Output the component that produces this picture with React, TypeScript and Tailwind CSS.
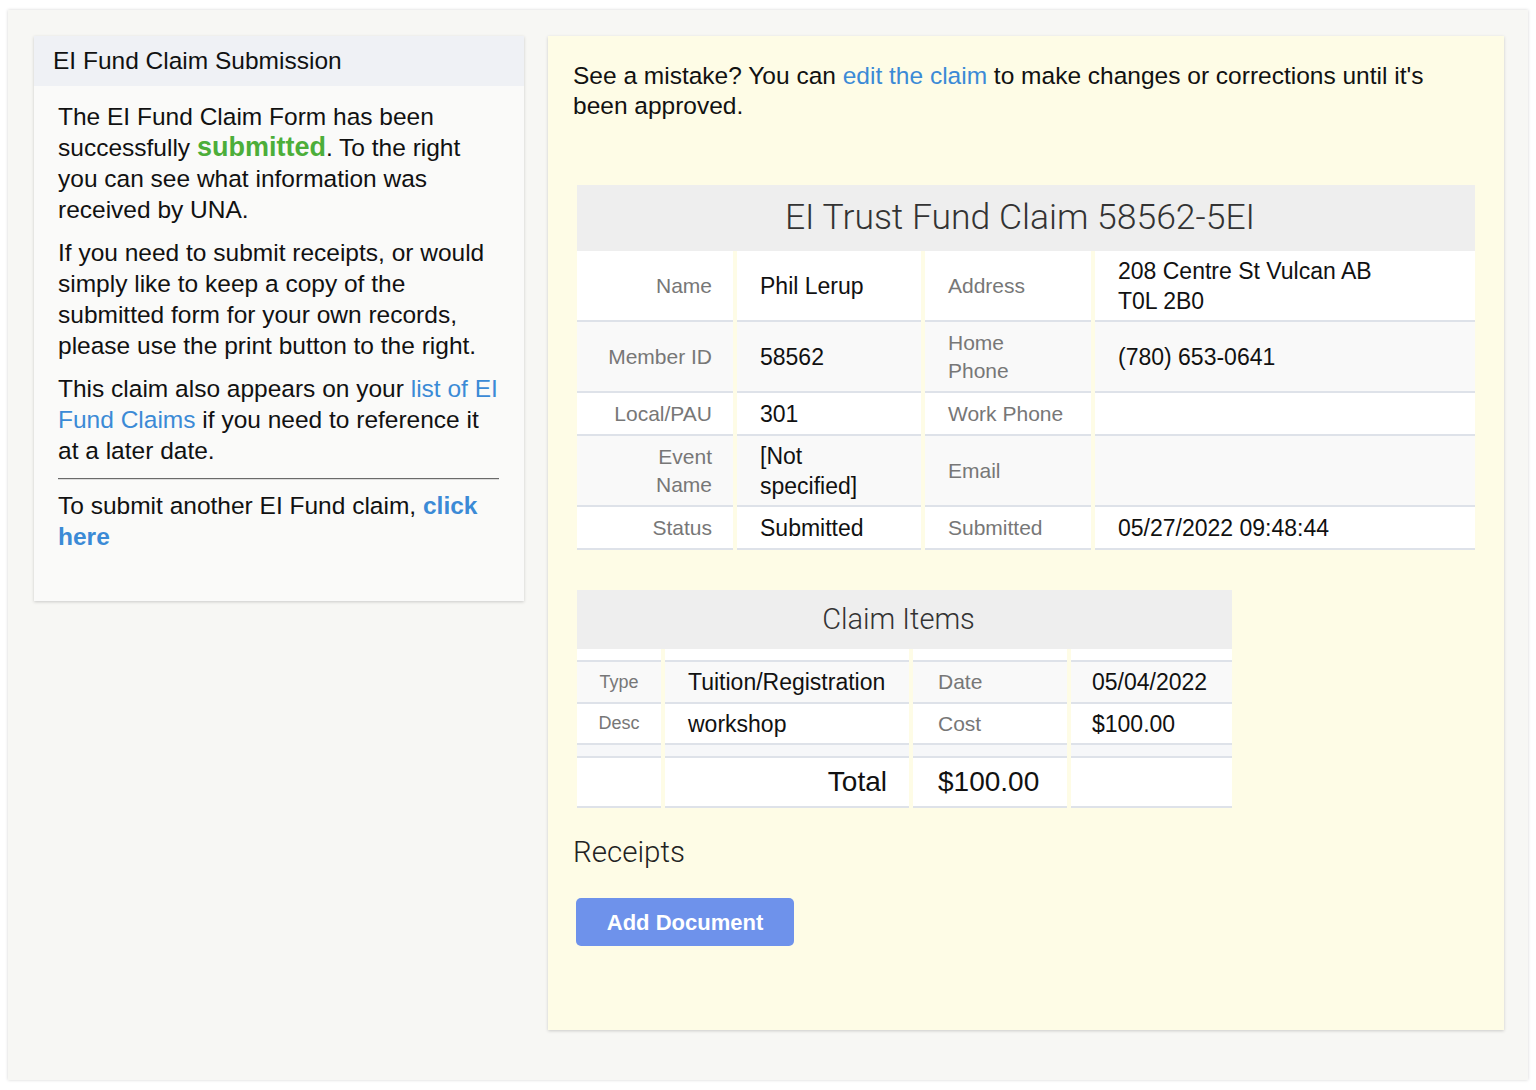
import React from "react";

const sans = { fontFamily: '"Liberation Sans", Arial, Helvetica, sans-serif' };
const light = { fontFamily: 'Roboto, "Liberation Sans", Arial, sans-serif' };

type Row = {
  l1: React.ReactNode;
  v1: React.ReactNode;
  l2: React.ReactNode;
  v2: React.ReactNode;
  tall?: boolean;
  alt?: boolean;
};

const claimRows: Row[] = [
  {
    l1: "Name",
    v1: "Phil Lerup",
    l2: "Address",
    v2: (
      <>
        208 Centre St Vulcan AB
        <br />
        T0L 2B0
      </>
    ),
    tall: true,
  },
  {
    l1: "Member ID",
    v1: "58562",
    l2: (
      <>
        Home
        <br />
        Phone
      </>
    ),
    v2: "(780) 653-0641",
    tall: true,
    alt: true,
  },
  { l1: "Local/PAU", v1: "301", l2: "Work Phone", v2: "" },
  {
    l1: (
      <>
        Event
        <br />
        Name
      </>
    ),
    v1: (
      <>
        [Not
        <br />
        specified]
      </>
    ),
    l2: "Email",
    v2: "",
    tall: true,
    alt: true,
  },
  { l1: "Status", v1: "Submitted", l2: "Submitted", v2: "05/27/2022 09:48:44" },
];

const cell = "border-b-2 border-[#dee2e9] whitespace-nowrap";
const lbl = "text-[21px] leading-[28px] text-[#777]";
const val = "text-[23px] leading-[30px] text-[#111]";

const ClaimTable = () => {
  return (
    <table className="w-full border-separate border-spacing-x-[4px] border-spacing-y-0" style={sans}>
      <thead>
        <tr>
          <th
            colSpan={4}
            className="h-[66px] bg-[#eeeeee] pr-[12px] text-center text-[35.5px] font-light text-[#333]"
            style={light}
          >
            EI Trust Fund Claim 58562-5EI
          </th>
        </tr>
      </thead>
      <tbody>
        {claimRows.map((r, i) => {
          const bg = r.alt ? "bg-[#f9f9f9]" : "bg-white";
          const h = r.tall ? "h-[71px]" : "h-[43px]";
          return (
            <tr key={i}>
              <td className={`${cell} ${bg} ${h} ${lbl} w-[156px] text-right pr-[21px]`}>{r.l1}</td>
              <td className={`${cell} ${bg} ${val} w-[184px] pl-[23px]`}>{r.v1}</td>
              <td className={`${cell} ${bg} ${lbl} w-[166px] pl-[23px]`}>{r.l2}</td>
              <td className={`${cell} ${bg} ${val} pl-[23px]`}>{r.v2}</td>
            </tr>
          );
        })}
      </tbody>
    </table>
  );
};

const ItemsTable = () => {
  return (
    <table className="w-[663px] border-separate border-spacing-x-[4px] border-spacing-y-0" style={sans}>
      <thead>
        <tr>
          <th
            colSpan={4}
            className="h-[59px] bg-[#eeeeee] pr-[12px] text-center text-[29px] font-light text-[#333]"
            style={light}
          >
            Claim Items
          </th>
        </tr>
        <tr>
          <td className={`${cell} h-[13px] bg-white w-[84px]`}></td>
          <td className={`${cell} h-[13px] bg-white w-[244px]`}></td>
          <td className={`${cell} h-[13px] bg-white w-[154px]`}></td>
          <td className={`${cell} h-[13px] bg-white`}></td>
        </tr>
      </thead>
      <tbody>
        <tr>
          <td className={`${cell} h-[42px] bg-[#f9f9f9] text-center text-[18px] text-[#777]`}>Type</td>
          <td className={`${cell} bg-[#f9f9f9] ${val} pl-[23px]`}>Tuition/Registration</td>
          <td className={`${cell} bg-[#f9f9f9] ${lbl} pl-[25px]`}>Date</td>
          <td className={`${cell} bg-[#f9f9f9] ${val} pl-[21px]`}>05/04/2022</td>
        </tr>
        <tr>
          <td className={`${cell} h-[41px] bg-white text-center text-[18px] text-[#777]`}>Desc</td>
          <td className={`${cell} bg-white ${val} pl-[23px]`}>workshop</td>
          <td className={`${cell} bg-white ${lbl} pl-[25px]`}>Cost</td>
          <td className={`${cell} bg-white ${val} pl-[21px]`}>$100.00</td>
        </tr>
        <tr>
          <td className={`${cell} h-[13px] bg-[#f6f7f9]`}></td>
          <td className={`${cell} bg-[#f6f7f9]`}></td>
          <td className={`${cell} bg-[#f6f7f9]`}></td>
          <td className={`${cell} bg-[#f6f7f9]`}></td>
        </tr>
        <tr>
          <td className={`${cell} h-[50px] bg-white`}></td>
          <td className={`${cell} bg-white text-right pr-[22px] text-[28px] text-[#111]`}>Total</td>
          <td className={`${cell} bg-white pl-[25px] text-[28px] text-[#111]`}>$100.00</td>
          <td className={`${cell} bg-white`}></td>
        </tr>
      </tbody>
    </table>
  );
};

const App = () => {
  return (
    <div className="min-h-[1090px] bg-white pt-[10px] px-[8px]" style={sans}>
      <div className="h-[1070px] bg-[#f7f7f4] shadow-[0_0_3px_rgba(0,0,0,0.18)] flex items-start gap-[24px] pl-[26px] pr-[24px] pt-[26px]">
        {/* left card */}
        <div className="w-[490px] shrink-0 bg-[#fafaf9] shadow-[0_1px_3px_rgba(0,0,0,0.18)] pb-[49px]">
          <div className="h-[50px] bg-[#eff1f5] flex items-center px-[19px] text-[24.5px] text-[#111]">
            EI Fund Claim Submission
          </div>
          <div className="px-[24px] pr-[25px] pt-[15px] text-[24.5px] leading-[31px] text-[#111]">
            <p className="mb-[12px]">
              The EI Fund Claim Form has been successfully{" "}
              <span className="font-bold text-[27px] text-[#4cae3a]">submitted</span>. To the right you can see
              what information was received by UNA.
            </p>
            <p className="mb-[12px]">
              If you need to submit receipts, or would simply like to keep a copy of the submitted form for your
              own records, please use the print button to the right.
            </p>
            <p>
              This claim also appears on your <span className="text-[#3b8ad6]">list of EI Fund Claims</span> if
              you need to reference it at a later date.
            </p>
            <div className="mt-[12px] mb-[10px] border-t border-b border-t-[#6a6a6a] border-b-[#dcdcdc]" />
            <p>
              To submit another EI Fund claim, <span className="font-bold text-[#3b8ad6]">click here</span>
            </p>
          </div>
        </div>

        {/* right panel */}
        <div className="flex-1 bg-[#fefce6] shadow-[0_1px_3px_rgba(0,0,0,0.18)] px-[25px] pt-[25px] pb-[84px]">
          <p className="text-[24.5px] leading-[30px] text-[#111]">
            See a mistake? You can <span className="text-[#3b8ad6]">edit the claim</span> to make changes or
            corrections until it's been approved.
          </p>
          <div className="mt-[64px]">
            <ClaimTable />
          </div>
          <div className="mt-[40px]">
            <ItemsTable />
          </div>
          <h2 className="mt-[26px] text-[29.5px] leading-[37px] font-light text-[#222]" style={light}>
            Receipts
          </h2>
          <button className="mt-[27px] ml-[3px] w-[218px] h-[48px] rounded-[5px] bg-[#6e92eb] text-white text-[22px] font-bold">
            Add Document
          </button>
        </div>
      </div>
    </div>
  );
};

export default App;
